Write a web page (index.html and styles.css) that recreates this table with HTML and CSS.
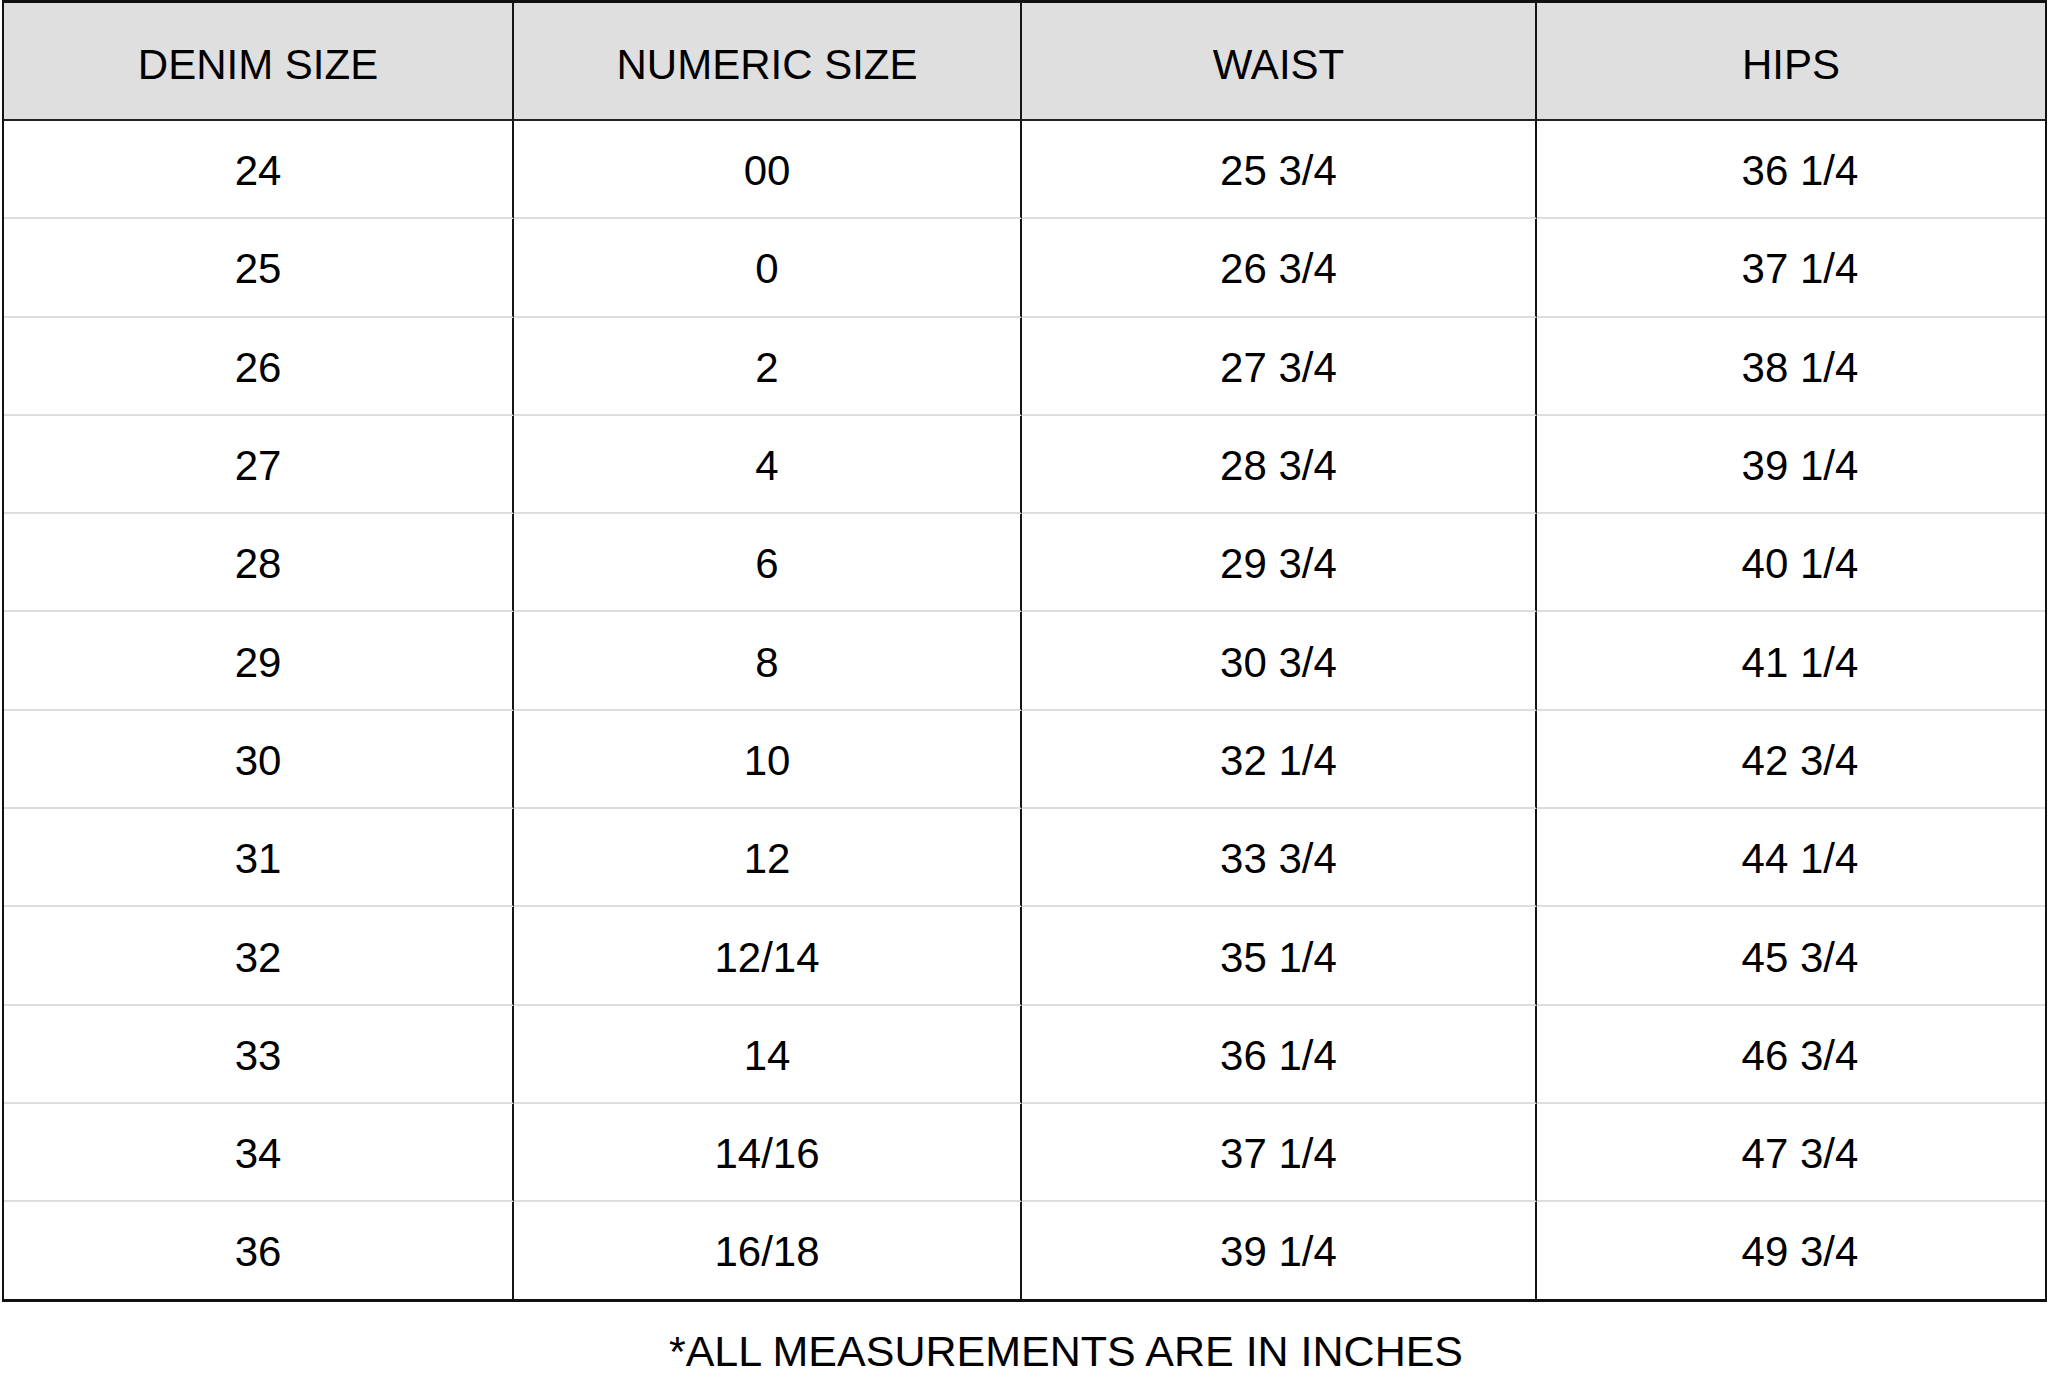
FILE: index.html
```html
<!DOCTYPE html>
<html lang="en">
<head>
<meta charset="utf-8">
<title>Denim Size Chart</title>
<link rel="stylesheet" href="styles.css">
</head>
<body>
<main class="page">
  <div class="chart">
    <div class="cell head">DENIM SIZE</div>
    <div class="cell head">NUMERIC SIZE</div>
    <div class="cell head">WAIST</div>
    <div class="cell head last">HIPS</div>

    <div class="cell">24</div><div class="cell">00</div><div class="cell">25 3/4</div><div class="cell last">36 1/4</div>
    <div class="cell">25</div><div class="cell">0</div><div class="cell">26 3/4</div><div class="cell last">37 1/4</div>
    <div class="cell">26</div><div class="cell">2</div><div class="cell">27 3/4</div><div class="cell last">38 1/4</div>
    <div class="cell">27</div><div class="cell">4</div><div class="cell">28 3/4</div><div class="cell last">39 1/4</div>
    <div class="cell">28</div><div class="cell">6</div><div class="cell">29 3/4</div><div class="cell last">40 1/4</div>
    <div class="cell">29</div><div class="cell">8</div><div class="cell">30 3/4</div><div class="cell last">41 1/4</div>
    <div class="cell">30</div><div class="cell">10</div><div class="cell">32 1/4</div><div class="cell last">42 3/4</div>
    <div class="cell">31</div><div class="cell">12</div><div class="cell">33 3/4</div><div class="cell last">44 1/4</div>
    <div class="cell">32</div><div class="cell">12/14</div><div class="cell">35 1/4</div><div class="cell last">45 3/4</div>
    <div class="cell">33</div><div class="cell">14</div><div class="cell">36 1/4</div><div class="cell last">46 3/4</div>
    <div class="cell">34</div><div class="cell">14/16</div><div class="cell">37 1/4</div><div class="cell last">47 3/4</div>
    <div class="cell bottom">36</div><div class="cell bottom">16/18</div><div class="cell bottom">39 1/4</div><div class="cell bottom last">49 3/4</div>
  </div>
  <p class="note">*ALL MEASUREMENTS ARE IN INCHES</p>
</main>
</body>
</html>
```

FILE: styles.css
```css
html, body {
  margin: 0;
  padding: 0;
  background: #ffffff;
}

.page {
  width: 2048px;
  height: 1381px;
  overflow: hidden;
  font-family: "Liberation Sans", Arial, sans-serif;
  color: #000;
}

.chart {
  box-sizing: border-box;
  width: 2045px;
  margin-left: 2px;
  border-left: 2px solid #111;
  border-right: 2px solid #111;
  border-top: 3px solid #111;
  border-bottom: 3px solid #111;
  display: grid;
  grid-template-columns: 510px 508px 515px 1fr;
  grid-template-rows: 118px repeat(11, 98.3px) 96.3px;
}

.cell {
  display: flex;
  align-items: center;
  justify-content: center;
  padding-top: 4px;
  font-size: 42px;
  line-height: 1;
  border-right: 2px solid #151515;
  border-bottom: 2px solid #dddddd;
  box-sizing: border-box;
}

.cell.last {
  border-right: none;
  padding-left: 18px;
}

.cell.head.last {
  padding-left: 0;
}

.cell.bottom {
  border-bottom: none;
}

.head {
  padding-top: 7px;
  background: #dfdfdf;
  border-bottom: 2px solid #222222;
}

.note {
  margin: 26px 0 0 84px;
  text-align: center;
  font-size: 43px;
  line-height: 46px;
}
```
